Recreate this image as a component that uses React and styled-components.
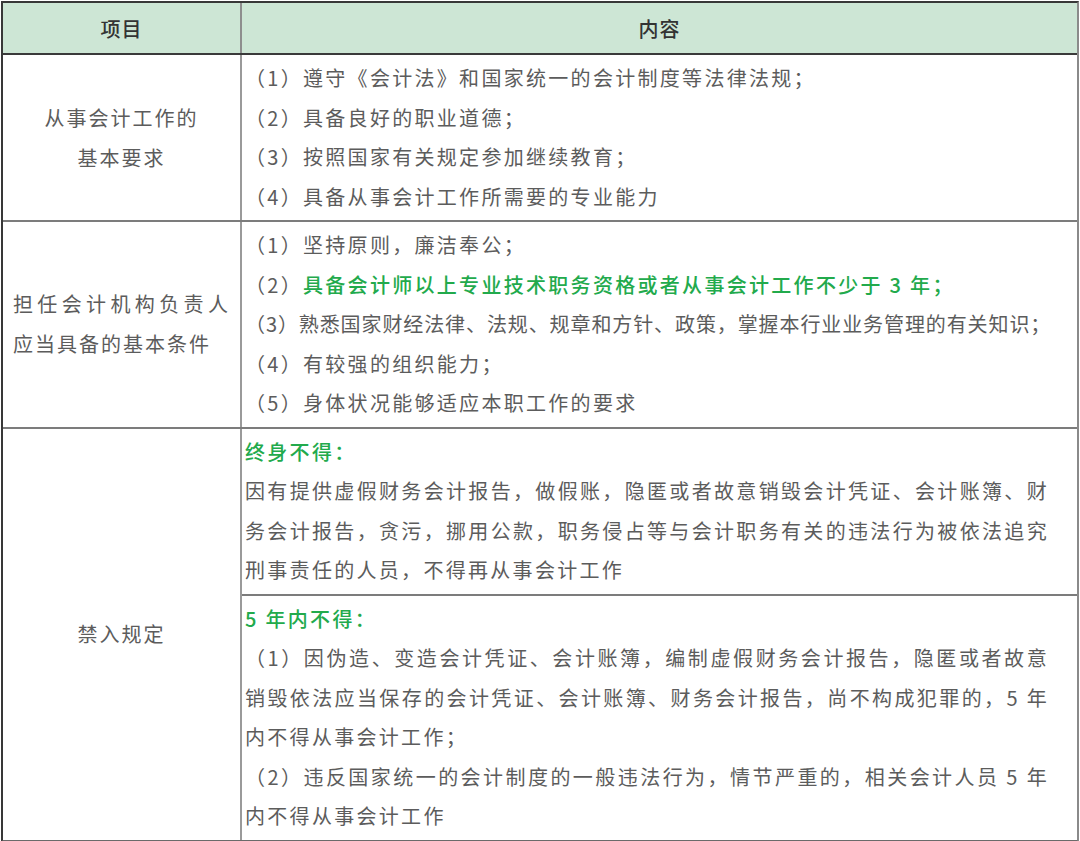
import React from 'react'
import styled, { createGlobalStyle } from 'styled-components'

const GlobalStyle = createGlobalStyle`
    body {
        margin: 0;
        background: #fff;
        font-family: "Noto Sans CJK SC", "Noto Sans", sans-serif;
    }
`

const Page = styled.div`
    padding: 1px 1px 0 1px;
`

const Table = styled.div`
    width: 1074px;
    border-top: 2px solid #383838;
    border-left: 2px solid #383838;
    border-right: 2px solid #8a8a8a;
    border-bottom: 2px solid #6a6a6a;
    color: #5c5c5c;
    font-size: 20px;
`

const Row = styled.div`
    display: grid;
    grid-template-columns: 239px 1fr;
    border-bottom: ${({ last }) => (last ? 'none' : '2px solid #7c7c7c')};
`

const HeaderRow = styled(Row)`
    background: #cde6d5;
    height: 50px;
    border-bottom: 2px solid #3a3a3a;
`

const HeadCell = styled.div`
    display: flex;
    align-items: center;
    justify-content: center;
    color: #333;
    font-weight: 500;
    letter-spacing: 1px;
    border-right: ${({ divider }) => (divider ? '2px solid #8e8e8e' : 'none')};
`

const LabelCell = styled.div`
    display: flex;
    flex-direction: column;
    justify-content: center;
    align-items: ${({ left }) => (left ? 'stretch' : 'center')};
    padding: 0 ${({ left }) => (left ? '10px' : '0')};
    border-right: 2px solid #9a9a9a;
    line-height: 40px;
    letter-spacing: 2px;
`

const LabelLine = styled.div`
    text-align: ${({ justify }) => (justify ? 'justify' : 'left')};
    text-align-last: ${({ justify }) => (justify ? 'justify' : 'auto')};
`

const ContentCell = styled.div`
    display: flex;
    flex-direction: column;
`

const Block = styled.div`
    padding: 3px 28px 4px 3px;
    border-top: ${({ divided }) => (divided ? '2px solid #7c7c7c' : 'none')};
`

const Line = styled.div`
    line-height: 39.5px;
    white-space: nowrap;
    letter-spacing: ${({ tight }) => (tight ? '0.9px' : '2.3px')};
    color: ${({ green }) => (green ? '#22aa4c' : 'inherit')};
    font-weight: ${({ green }) => (green ? 500 : 400)};
    text-align: ${({ justify }) => (justify ? 'justify' : 'left')};
    text-align-last: ${({ justify }) => (justify ? 'justify' : 'auto')};
`

const GreenSpan = styled.span`
    color: #22aa4c;
    font-weight: 500;
`

const rows = [
    {
        label: ['从事会计工作的', '基本要求'],
        blocks: [[
            { t: '（1）遵守《会计法》和国家统一的会计制度等法律法规；' },
            { t: '（2）具备良好的职业道德；' },
            { t: '（3）按照国家有关规定参加继续教育；' },
            { t: '（4）具备从事会计工作所需要的专业能力' },
        ]],
    },
    {
        label: ['担任会计机构负责人', '应当具备的基本条件'],
        left: true,
        blocks: [[
            { t: '（1）坚持原则，廉洁奉公；' },
            { t: '（2）', g: '具备会计师以上专业技术职务资格或者从事会计工作不少于 3 年；' },
            { t: '（3）熟悉国家财经法律、法规、规章和方针、政策，掌握本行业业务管理的有关知识；', tight: true },
            { t: '（4）有较强的组织能力；' },
            { t: '（5）身体状况能够适应本职工作的要求' },
        ]],
    },
    {
        label: ['禁入规定'],
        blocks: [
            [
                { green: '终身不得：' },
                { t: '因有提供虚假财务会计报告，做假账，隐匿或者故意销毁会计凭证、会计账簿、财', j: true },
                { t: '务会计报告，贪污，挪用公款，职务侵占等与会计职务有关的违法行为被依法追究', j: true },
                { t: '刑事责任的人员，不得再从事会计工作' },
            ],
            [
                { green: '5 年内不得：' },
                { t: '（1）因伪造、变造会计凭证、会计账簿，编制虚假财务会计报告，隐匿或者故意', j: true },
                { t: '销毁依法应当保存的会计凭证、会计账簿、财务会计报告，尚不构成犯罪的，5 年', j: true },
                { t: '内不得从事会计工作；' },
                { t: '（2）违反国家统一的会计制度的一般违法行为，情节严重的，相关会计人员 5 年', j: true },
                { t: '内不得从事会计工作' },
            ],
        ],
    },
]

export default () => (
    <Page>
        <GlobalStyle />
        <Table>
            <HeaderRow>
                <HeadCell divider>项目</HeadCell>
                <HeadCell>内容</HeadCell>
            </HeaderRow>
            {rows.map((row, i) => (
                <Row key={i} last={i === rows.length - 1}>
                    <LabelCell left={row.left}>
                        {row.label.map((l, k) => (
                            <LabelLine key={k} justify={row.left && k === 0}>{l}</LabelLine>
                        ))}
                    </LabelCell>
                    <ContentCell>
                        {row.blocks.map((block, b) => (
                            <Block key={b} divided={b > 0}>
                                {block.map((line, k) =>
                                    line.green ? (
                                        <Line key={k} green>{line.green}</Line>
                                    ) : (
                                        <Line key={k} justify={line.j} tight={line.tight}>
                                            {line.t}
                                            {line.g && <GreenSpan>{line.g}</GreenSpan>}
                                        </Line>
                                    )
                                )}
                            </Block>
                        ))}
                    </ContentCell>
                </Row>
            ))}
        </Table>
    </Page>
)
